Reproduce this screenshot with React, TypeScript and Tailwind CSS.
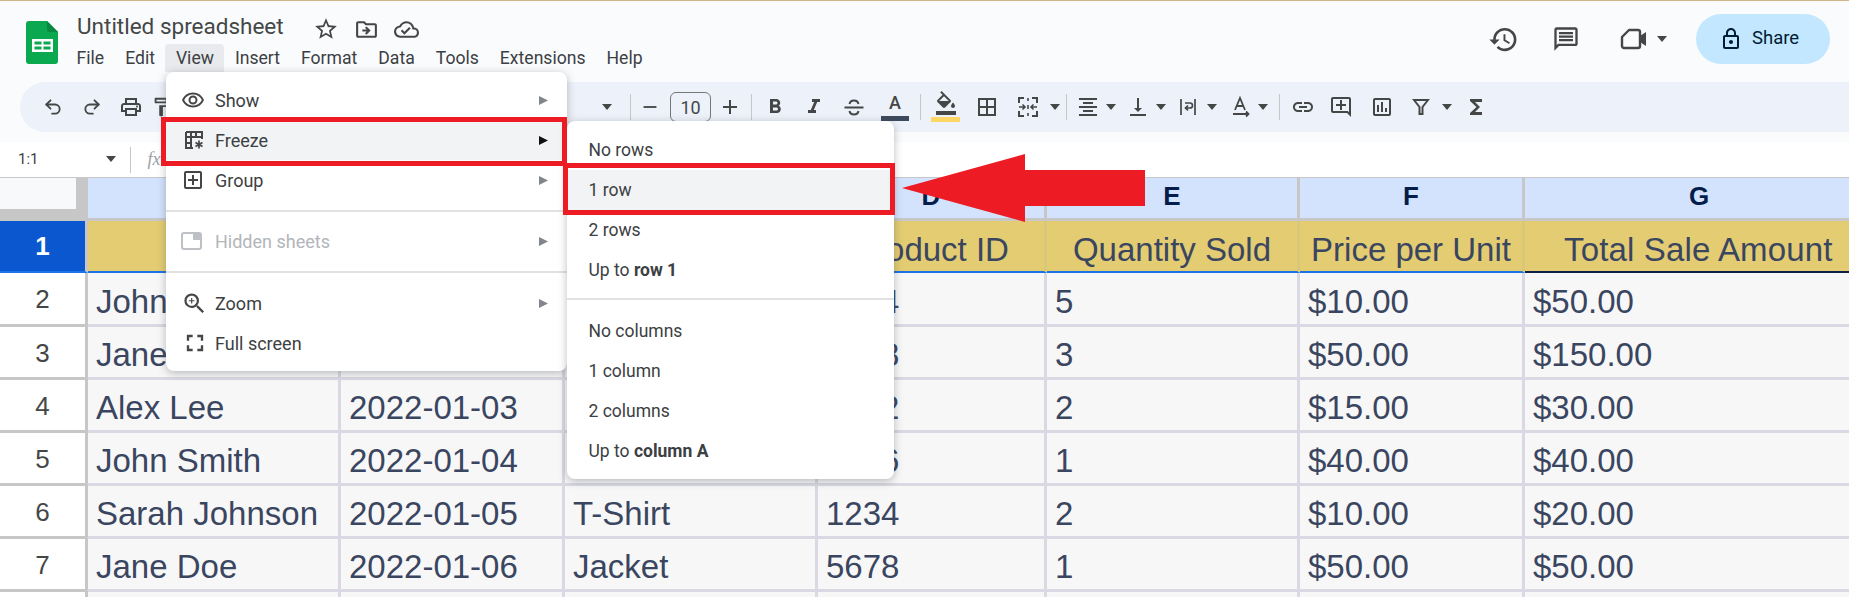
import type { ReactNode } from "react";
import { Undo2, Redo2 } from "lucide-react";
import {
  MdOutlineStarBorder,
  MdOutlineDriveFileMove,
  MdOutlineCloudDone,
  MdHistory,
  MdOutlineMessage,
  MdOutlineLock,
  MdOutlinePrint,
  MdOutlineFormatPaint,
  MdRemove,
  MdAdd,
  MdFormatBold,
  MdFormatItalic,
  MdFormatColorFill,
  MdBorderAll,
  MdFormatAlignCenter,
  MdVerticalAlignBottom,
  MdLink,
  MdOutlineAddComment,
  MdOutlineInsertChart,
  MdFunctions,
  MdOutlineRemoveRedEye,
  MdOutlineAddBox,
  MdZoomIn,
  MdFullscreen,
} from "react-icons/md";

// cells that sit fully under the open menus are left empty
const rows = [
  ["2", "John Smith", "", "", "1234", "5", "$10.00", "$50.00"],
  ["3", "Jane Doe", "", "", "5678", "3", "$50.00", "$150.00"],
  ["4", "Alex Lee", "2022-01-03", "", "9012", "2", "$15.00", "$30.00"],
  ["5", "John Smith", "2022-01-04", "", "3456", "1", "$40.00", "$40.00"],
  ["6", "Sarah Johnson", "2022-01-05", "T-Shirt", "1234", "2", "$10.00", "$20.00"],
  ["7", "Jane Doe", "2022-01-06", "Jacket", "5678", "1", "$50.00", "$50.00"],
  ["", "", "", "", "", "", "", ""],
];

const menuItems = [
  { label: "File", active: false },
  { label: "Edit", active: false },
  { label: "View", active: true },
  { label: "Insert", active: false },
  { label: "Format", active: false },
  { label: "Data", active: false },
  { label: "Tools", active: false },
  { label: "Extensions", active: false },
  { label: "Help", active: false },
];

function Caret({ className = "" }: { className?: string }) {
  return (
    <svg width="14" height="7" viewBox="0 0 14 7" className={`shrink-0 ${className}`}>
      <path d="M2 0h10L7 6z" fill="#444746" />
    </svg>
  );
}

function Sep({ className = "" }: { className?: string }) {
  return <div className={`w-px h-[26px] bg-[#c7c7c7] shrink-0 ${className}`} />;
}

function Tool({ className = "", children }: { className?: string; children: ReactNode }) {
  return (
    <div className={`w-6 h-6 flex items-center justify-center text-[#444746] shrink-0 ${className}`}>
      {children}
    </div>
  );
}

function SubArrow({ dark = false }: { dark?: boolean }) {
  return (
    <svg width="9" height="9" viewBox="0 0 9 9" className="ml-auto mr-[19px]">
      <path d="M0 0l9 4.5L0 9z" fill={dark ? "#111" : "#80868b"} />
    </svg>
  );
}

function Logo() {
  return (
    <svg width="32" height="43" viewBox="0 0 32 43" className="shrink-0">
      <path d="M3 0h18l11 11v29a3 3 0 0 1-3 3H3a3 3 0 0 1-3-3V3a3 3 0 0 1 3-3z" fill="#0aa84f" />
      <path d="M21 0l11 11H23a2 2 0 0 1-2-2z" fill="#078a40" />
      <path d="M6 18h21v13H6z" fill="#fff" />
      <path d="M8.5 20.5h7v3h-7zM17.5 20.5h7v3h-7zM8.5 25.5h7v3h-7zM17.5 25.5h7v3h-7z" fill="#0aa84f" />
    </svg>
  );
}

function FreezeIcon() {
  return (
    <svg width="22" height="22" viewBox="0 0 22 22" fill="none" stroke="#444746" strokeWidth="2">
      <path d="M3 3h16v7M3 3v16h7M8 3v16M13 3v6M3 8h16M3 14h6" />
      <path d="M16 11.5v8M12.5 13.5l7 4M19.5 13.5l-7 4" strokeWidth="1.7" />
    </svg>
  );
}

function HiddenIcon() {
  return (
    <svg width="22" height="20" viewBox="0 0 22 20" fill="none">
      <rect x="1" y="2" width="19" height="16" rx="2" stroke="#bdc1c6" strokeWidth="2" />
      <rect x="12" y="3" width="7" height="6" fill="#bdc1c6" />
    </svg>
  );
}

function StrikeIcon() {
  return (
    <svg width="22" height="22" viewBox="0 0 22 22" fill="none" stroke="#444746" strokeWidth="2">
      <path d="M6.5 8C7 5.5 9 4.5 11 4.5s4 1 4.5 3.5M1.5 11.5h19M6.5 15c.5 2.5 2.500 3.500 4.500 3.500s4-1 4.500-3.500" />
    </svg>
  );
}

function MergeIcon() {
  return (
    <svg width="22" height="22" viewBox="0 0 22 22" fill="none" stroke="#444746" strokeWidth="2">
      <path d="M7 2H2v5M15 2h5v5M7 20H2v-5M15 20h5v-5" />
      <path d="M2 11h6M5.5 8.5L8 11l-2.5 2.5M20 11h-6M16.5 8.5L14 11l2.5 2.5M11 2v3M11 9v4M11 17v3" strokeWidth="1.6" />
    </svg>
  );
}

function WrapIcon() {
  return (
    <svg width="20" height="20" viewBox="0 0 20 20" fill="none" stroke="#444746" strokeWidth="2">
      <path d="M2 2v16M16 2v16M6 6h5a2.500 2.500 0 0 1 0 5H7M9 8.500L6.500 11 9 13.500" strokeWidth="1.7" />
    </svg>
  );
}

function RotateIcon() {
  return (
    <svg width="22" height="22" viewBox="0 0 22 22" fill="none" stroke="#444746" strokeWidth="1.8">
      <path d="M5 14L10 2l5 12M6.800 10h6.400" />
      <path d="M3 18h15M16 15.500l2.500 2.500-2.500 2.500" />
    </svg>
  );
}

function FilterIcon() {
  return (
    <svg width="18" height="18" viewBox="0 0 18 18" fill="none" stroke="#444746" strokeWidth="2">
      <path d="M2 2h14l-5.500 7v7h-3V9z" />
    </svg>
  );
}

function VideoIcon() {
  return (
    <svg width="28" height="26" viewBox="0 0 28 26" fill="none" className="ml-[40px]">
      <path d="M9 4h9a2 2 0 0 1 2 2v14a2 2 0 0 1-2 2H4a2 2 0 0 1-2-2V11z" stroke="#444746" strokeWidth="2.400" strokeLinejoin="round" />
      <path d="M20 10l6-4v14l-6-4z" fill="#444746" />
    </svg>
  );
}

function MenuRow({ icon, label, arrow, muted }: { icon: ReactNode; label: string; arrow?: boolean; muted?: boolean }) {
  return (
    <div className={`h-10 flex items-center text-[18px] ${muted ? "text-[#b2b5b9]" : "text-[#3c4043]"}`}>
      <div className="w-[49px] pl-[15px] flex items-center text-[#444746]">{icon}</div>
      <span>{label}</span>
      {arrow && <SubArrow />}
    </div>
  );
}

function SubRow({ children }: { children: ReactNode }) {
  return <div className="h-10 flex items-center pl-[21.5px] text-[17.5px] text-[#3c4043]">{children}</div>;
}

export default function App() {
  return (
    <div
      className="relative w-[1849px] h-[597px] overflow-hidden bg-white"
      style={{ fontFamily: "Roboto, 'Liberation Sans', sans-serif" }}
    >
      <header className="h-[142px] bg-[#f9fbfd] border-t border-[#d2b48c]">
        <div className="h-[81px] flex">
          <div className="ml-[26px] mt-[20px]">
            <Logo />
          </div>
          <div className="ml-[19px] mt-[13px]">
            <div className="h-[30px] flex items-center text-[#444746]">
              <span className="text-[22.5px] leading-none -mt-[5px]">Untitled spreadsheet</span>
              <MdOutlineStarBorder size={26} className="ml-[29px]" />
              <MdOutlineDriveFileMove size={25} className="ml-[15px]" />
              <MdOutlineCloudDone size={25} className="ml-[15px]" />
            </div>
            <div className="flex -ml-[11px]">
              {menuItems.map((m) => (
                <div
                  key={m.label}
                  className={`h-7 px-[10.5px] flex items-center text-[17.6px] text-[#3c4043] rounded-t ${
                    m.active ? "bg-[#e8eaed]" : ""
                  }`}
                >
                  {m.label}
                </div>
              ))}
            </div>
          </div>
          <div className="ml-auto mr-[19px] mt-[13px] h-[50px] flex items-center text-[#444746]">
            <MdHistory size={31} />
            <MdOutlineMessage size={28} className="ml-[33px]" />
            <VideoIcon />
            <Caret className="ml-[7px]" />
            <div className="ml-[27px] w-[134px] h-[50px] rounded-full bg-[#c2e7ff] flex items-center pl-[23px] text-[#001d35]">
              <MdOutlineLock size={24} />
              <span className="ml-[9px] text-[18.5px]">Share</span>
            </div>
          </div>
        </div>
        <div className="h-[50px] ml-[20px] pl-[21px] rounded-l-[25px] bg-[#edf2fa] flex items-center">
          <Tool><Undo2 size={20} strokeWidth={2.2} /></Tool>
          <Tool className="ml-[15px]"><Redo2 size={20} strokeWidth={2.2} /></Tool>
          <Tool className="ml-[15px]"><MdOutlinePrint size={24} /></Tool>
          <Tool className="ml-[7px]"><MdOutlineFormatPaint size={22} /></Tool>
          <Caret className="ml-[426px]" />
          <Sep className="ml-[16px]" />
          <Tool className="ml-[7px]"><MdRemove size={22} /></Tool>
          <div className="ml-[8px] w-[41px] h-[30px] rounded-[6px] border border-[#747775] flex items-center justify-center text-[18px] text-[#444746]">
            10
          </div>
          <Tool className="ml-[7px]"><MdAdd size={24} /></Tool>
          <Sep className="ml-[9px]" />
          <Tool className="ml-[11px]"><MdFormatBold size={26} /></Tool>
          <Tool className="ml-[15px]"><MdFormatItalic size={26} /></Tool>
          <Tool className="ml-[16px]"><StrikeIcon /></Tool>
          <div className="ml-[15px] w-[28px] h-[30px] flex flex-col items-center">
            <span className="text-[18px] leading-[22px] font-medium text-[#444746]">A</span>
            <div className="w-full h-[5px] mt-[2px] bg-[#3c4a5e]" />
          </div>
          <Sep className="ml-[11px]" />
          <div className="ml-[10px] w-[29px] h-[32px] flex flex-col items-center text-[#444746]">
            <MdFormatColorFill size={24} />
            <div className="w-full h-[5px] mt-[2px] bg-[#fdd663]" />
          </div>
          <Tool className="ml-[15px]"><MdBorderAll size={24} /></Tool>
          <Tool className="ml-[17px]"><MergeIcon /></Tool>
          <Caret className="ml-[8px]" />
          <Sep className="ml-[4px]" />
          <Tool className="ml-[9px]"><MdFormatAlignCenter size={24} /></Tool>
          <Caret className="ml-[4px]" />
          <Tool className="ml-[8px]"><MdVerticalAlignBottom size={24} /></Tool>
          <Caret className="ml-[4px]" />
          <Tool className="ml-[9px]"><WrapIcon /></Tool>
          <Caret className="ml-[4px]" />
          <Tool className="ml-[10px]"><RotateIcon /></Tool>
          <Caret className="ml-[3px]" />
          <Sep className="ml-[9px]" />
          <Tool className="ml-[11px]"><MdLink size={24} /></Tool>
          <Tool className="ml-[14px]"><MdOutlineAddComment size={24} /></Tool>
          <Tool className="ml-[17px]"><MdOutlineInsertChart size={24} /></Tool>
          <Tool className="ml-[15px]"><FilterIcon /></Tool>
          <Caret className="ml-[7px]" />
          <Tool className="ml-[10px]"><MdFunctions size={24} /></Tool>
        </div>
      </header>

      <div className="h-[35px] bg-white flex items-center text-[#3c4043]">
        <span className="ml-[18px] text-[15px]">1:1</span>
        <Caret className="ml-[65px]" />
        <Sep className="ml-[12px]" />
        <span className="ml-[17px] text-[18px] italic text-[#9aa0a6]" style={{ fontFamily: "'Liberation Serif', serif" }}>
          fx
        </span>
      </div>

      <div
        className="grid grid-cols-[88px_253px_224px_253px_229px_253px_225px_1fr] grid-rows-[44px_52px_54px_53px_53px_53px_53px_53px_53px] text-[33px] leading-[37px] text-[#3a4660]"
        style={{ fontFamily: "'Liberation Sans', Arial, sans-serif" }}
      >
        <div className="bg-[#f8f9fa] border-t border-r-[12px] border-b-[12px] border-[#c7c7c7]" />
        {["", "", "", "D", "E", "F"].map((c, i) => (
          <div
            key={i}
            className="bg-[#d3e3fd] border-t border-r-[3px] border-b-[3px] border-[#c7c7c7] flex items-center justify-center pb-[3px] text-[26px] font-bold text-[#041e49]"
          >
            {c}
          </div>
        ))}
        <div className="bg-[#d3e3fd] border-t border-b-[3px] border-[#c7c7c7] flex items-center justify-center pl-[24px] pb-[3px] text-[26px] font-bold text-[#041e49]">
          G
        </div>

        <div className="bg-[#0b57d0] border-r-[3px] border-[#c7c7c7] border-b-2 border-b-[#1a73e8] flex items-center justify-center text-[26px] font-bold text-white">
          1
        </div>
        {["", "", "", "Product ID", "Quantity Sold", "Price per Unit"].map((c, i) => (
          <div
            key={i}
            className="bg-[#e4cc73] border-r-[3px] border-r-[#d9c878] border-b-2 border-b-[#1a73e8] flex items-end justify-center pb-[3px] whitespace-nowrap overflow-hidden"
          >
            {c}
          </div>
        ))}
        <div className="bg-[#e4cc73] border-b-2 border-b-[#0b1f4b] flex items-end pl-[39px] pb-[3px] whitespace-nowrap tracking-[0.15px]">
          Total Sale Amount
        </div>

        {rows.map((r, n) => (
          <div key={n} className="contents">
            <div className="bg-white border-r-[3px] border-b-[3px] border-[#c7c7c7] flex items-center justify-center pt-[2px] text-[26px] text-[#444746]">
              {r[0]}
            </div>
            {r.slice(1).map((v, i) => (
              <div
                key={i}
                className={`bg-[#f7f7f8] border-b-[3px] border-[#d9d8e3] flex items-end pl-2 pb-[4px] whitespace-nowrap overflow-hidden ${
                  i < 6 ? "border-r-[3px]" : ""
                }`}
              >
                {v}
              </div>
            ))}
          </div>
        ))}
      </div>

      <div className="absolute left-[166px] top-[72px] w-[401px] h-[299px] pt-[8px] bg-white rounded-lg shadow-[0_2px_8px_rgba(60,64,67,0.35)]">
        <MenuRow icon={<MdOutlineRemoveRedEye size={24} />} label="Show" arrow />
        <div className="h-10 flex items-center bg-[#f1f3f4] text-[18px] text-[#3c4043]">
          <div className="w-[49px] pl-[17px] flex items-center"><FreezeIcon /></div>
          <span>Freeze</span>
          <SubArrow dark />
        </div>
        <MenuRow icon={<MdOutlineAddBox size={24} />} label="Group" arrow />
        <div className="h-[2px] mt-[10px] mb-[9px] bg-[#e0e1e3]" />
        <MenuRow icon={<HiddenIcon />} label="Hidden sheets" arrow muted />
        <div className="h-[2px] my-[10px] bg-[#e0e1e3]" />
        <MenuRow icon={<MdZoomIn size={27} />} label="Zoom" arrow />
        <MenuRow icon={<MdFullscreen size={28} />} label="Full screen" />
      </div>

      <div className="absolute left-[567px] top-[121px] w-[327px] h-[358px] pt-[9px] bg-white rounded-lg shadow-[0_2px_8px_rgba(60,64,67,0.35)]">
        <SubRow>No rows</SubRow>
        <div className="h-10 flex items-center pl-[21.5px] text-[17.5px] text-[#3c4043] bg-[#f1f3f4]">1 row</div>
        <SubRow>2 rows</SubRow>
        <SubRow>
          <span>Up to&nbsp;<b>row 1</b></span>
        </SubRow>
        <div className="h-[2px] mt-[8px] mb-[11px] bg-[#e0e1e3]" />
        <SubRow>No columns</SubRow>
        <SubRow>1 column</SubRow>
        <SubRow>2 columns</SubRow>
        <SubRow>
          <span>Up to&nbsp;<b>column A</b></span>
        </SubRow>
      </div>

      <div className="absolute left-[161px] top-[117px] w-[406px] h-[49px] border-[5px] border-[#ed1c24]" />
      <div className="absolute left-[563px] top-[163px] w-[332px] h-[52px] border-[5px] border-[#ed1c24]" />

      <svg width="250" height="72" viewBox="0 0 250 72" className="absolute left-[900px] top-[152px]">
        <path d="M2 36L125 2v16h120v36H125v16z" fill="#ed1c24" />
      </svg>
    </div>
  );
}
